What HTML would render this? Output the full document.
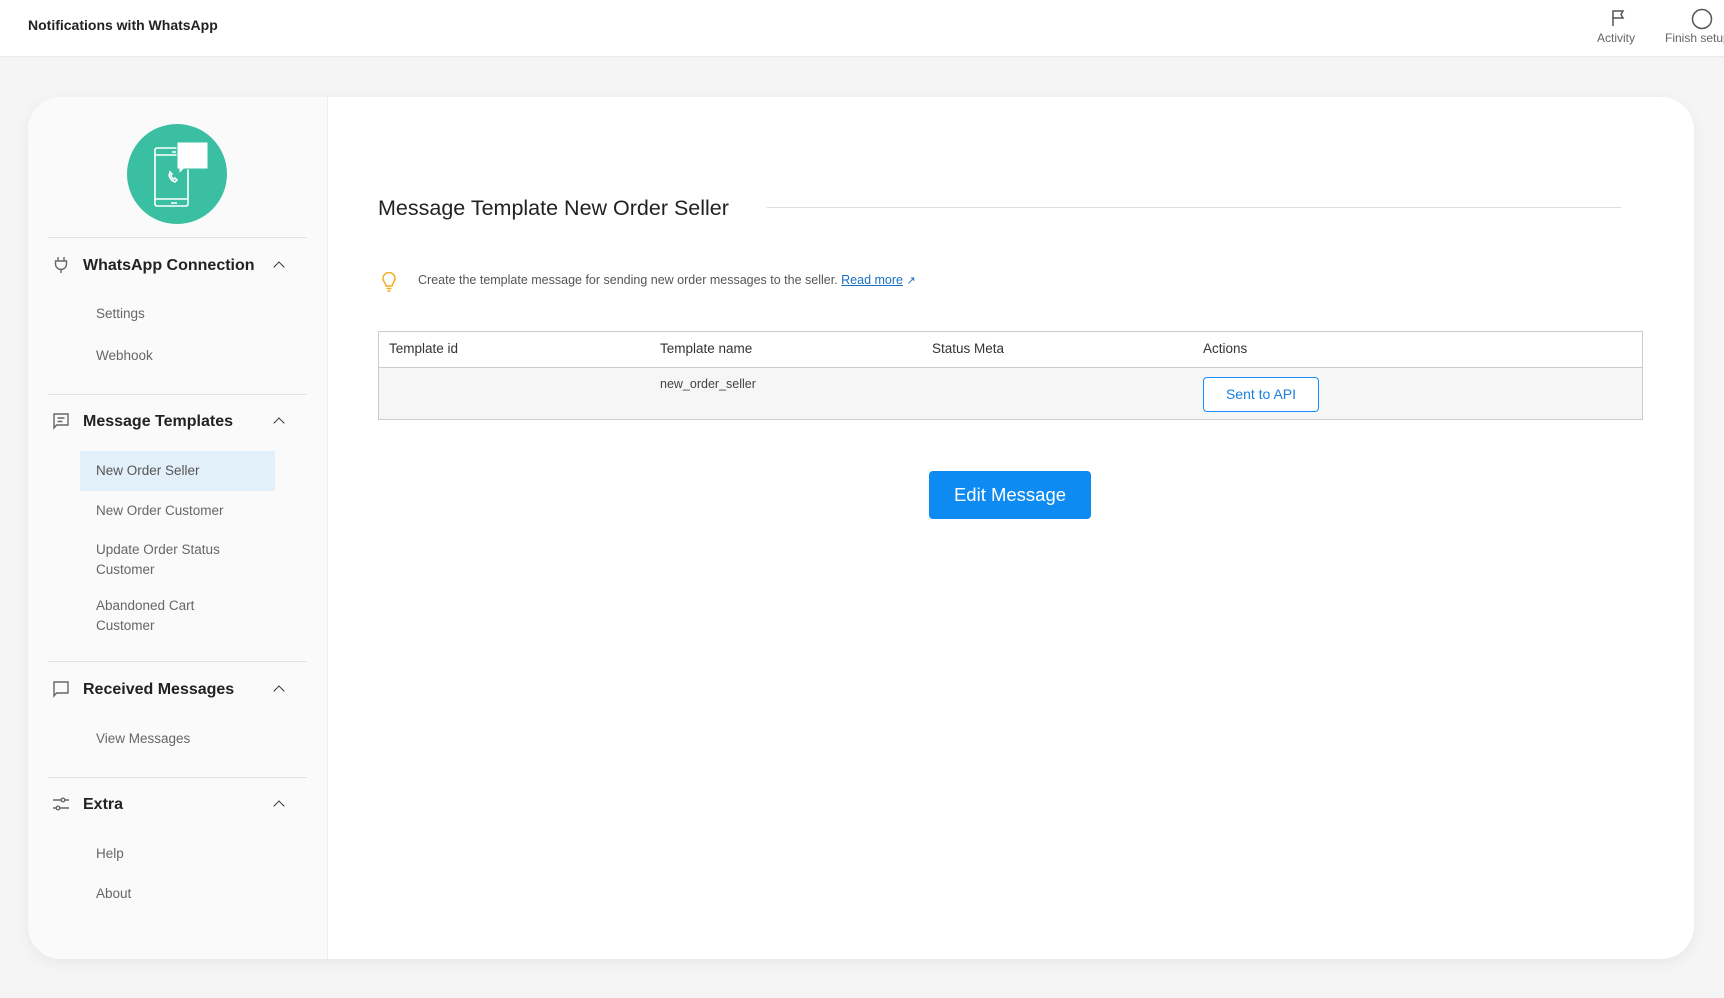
<!DOCTYPE html>
<html><head><meta charset="utf-8"><style>
*{box-sizing:border-box;margin:0;padding:0}
body{width:1724px;height:998px;background:#f5f5f5;font-family:"Liberation Sans",sans-serif;position:relative;overflow:hidden;color:#333}
.a{position:absolute;white-space:nowrap}
.hdr{position:absolute;left:0;top:0;width:1724px;height:57px;background:#fff;border-bottom:1px solid #eaeaea}
.card{position:absolute;left:28px;top:97px;width:1666px;height:862px;background:#fff;border-radius:33px;overflow:hidden;box-shadow:0 4px 14px rgba(0,0,0,.06)}
.side{position:absolute;left:0;top:0;width:300px;height:100%;background:#fafafa;border-right:1px solid #eee}
.div{position:absolute;left:20px;width:259px;height:1px;background:#e2e2e2}
.sec{position:absolute;left:55px;font-size:16px;font-weight:bold;color:#222;transform:translateY(-50%)}
.it{position:absolute;left:68px;font-size:13.5px;color:#666;line-height:20px}
.chev{position:absolute;left:247px;width:8px;height:8px;border-left:1.6px solid #333;border-top:1.6px solid #333;transform:rotate(45deg)}
.ic{position:absolute;left:24px}
</style></head><body>
<div class="hdr">
<div class="a" style="left:28px;top:17px;font-size:14px;font-weight:bold;color:#222">Notifications with WhatsApp</div>
<svg class="a" style="left:1610px;top:9px" width="18" height="18" viewBox="0 0 18 18" fill="none" stroke="#555" stroke-width="1.5"><path d="M3 17V2h10l-2 3.5 2 3.5H3"/></svg>
<div class="a" style="left:1597px;top:31px;font-size:12px;color:#666">Activity</div>
<svg class="a" style="left:1691px;top:8px" width="22" height="22"><circle cx="11" cy="11" r="9.5" fill="none" stroke="#555" stroke-width="1.5"/></svg>
<div class="a" style="left:1665px;top:31px;font-size:12px;color:#666">Finish setup</div>
</div>
<div class="card">
<div class="side">
<svg class="a" style="left:99px;top:27px" width="100" height="100" viewBox="0 0 100 100"><circle cx="50" cy="50" r="50" fill="#3bbfa2"/><g fill="none" stroke="#fff" stroke-width="1.6"><rect x="28" y="24" width="33" height="58" rx="2"/><path d="M28 31h33M28 75h33M45 28h4M44 79h6"/><path d="M43 49c-2 2 0 7 5 9l2-2-2-2-1 1c-2-1-3-2-3-4l1-1-2-2z"/></g><path d="M50 18h31v27H57l-5 5v-5h-2z" fill="#fff" stroke="#3bbfa2" stroke-width="1"/></svg>
<div class="div" style="top:140px"></div>
<svg class="ic" style="top:159px" width="18" height="18" viewBox="0 0 18 18" fill="none" stroke="#666" stroke-width="1.4"><path d="M6 1v4M12 1v4M3.5 5h11v3a5.5 5.5 0 0 1-11 0zM9 13.5V17"/></svg>
<div class="sec" style="top:169px">WhatsApp Connection</div><div class="chev" style="top:166px"></div>
<div class="it" style="top:207px">Settings</div>
<div class="it" style="top:249px">Webhook</div>
<div class="div" style="top:297px"></div>
<svg class="ic" style="top:315px" width="18" height="18" viewBox="0 0 18 18" fill="none" stroke="#666" stroke-width="1.4"><path d="M2 2h14v11H4.5L2 16z M5.5 6h7M5.5 9.5h5"/></svg>
<div class="sec" style="top:325px">Message Templates</div><div class="chev" style="top:322px"></div>
<div class="a" style="left:52px;top:354px;width:195px;height:40px;background:#e2f0fa"></div>
<div class="it" style="top:364px;color:#555">New Order Seller</div>
<div class="it" style="top:404px">New Order Customer</div>
<div class="it" style="top:443px;white-space:normal;width:170px">Update Order Status Customer</div>
<div class="it" style="top:499px;white-space:normal;width:150px">Abandoned Cart Customer</div>
<div class="div" style="top:564px"></div>
<svg class="ic" style="top:583px" width="18" height="18" viewBox="0 0 18 18" fill="none" stroke="#666" stroke-width="1.4"><path d="M2 2h14v11H4.5L2 16z"/></svg>
<div class="sec" style="top:593px">Received Messages</div><div class="chev" style="top:590px"></div>
<div class="it" style="top:632px">View Messages</div>
<div class="div" style="top:680px"></div>
<svg class="ic" style="top:698px" width="18" height="18" viewBox="0 0 18 18" fill="none" stroke="#666" stroke-width="1.4"><path d="M1 5h16M1 13h16"/><circle cx="11" cy="5" r="1.8" fill="#fafafa"/><circle cx="6" cy="13" r="1.8" fill="#fafafa"/></svg>
<div class="sec" style="top:708px">Extra</div><div class="chev" style="top:705px"></div>
<div class="it" style="top:747px">Help</div>
<div class="it" style="top:787px">About</div>
</div>
<div class="a" style="left:350px;top:99px;font-size:21.5px;color:#222">Message Template New Order Seller</div>
<div class="a" style="left:739px;top:110px;width:854px;height:1px;background:#ddd"></div>
<svg class="a" style="left:353px;top:175px" width="16" height="20" viewBox="0 0 16 20" fill="none" stroke="#f0ad1f" stroke-width="1.4"><path d="M5 14c0-3-3-4-3-7.5a6 6 0 0 1 12 0C14 10 11 11 11 14z M5.5 16.5h5M6.5 19h3"/></svg>
<div class="a" style="left:390px;top:176px;font-size:12.5px;color:#555">Create the template message for sending new order messages to the seller. <span style="color:#1a6fc2;text-decoration:underline">Read more</span> <span style="font-size:11px;color:#1a6fc2">↗</span></div>
<div class="a" style="left:350px;top:234px;width:1265px;height:89px;border:1px solid #ccc;background:#f6f6f6">
<div class="a" style="left:0;top:0;width:1263px;height:36px;background:#fff;border-bottom:1px solid #ccc"></div>
<div class="a" style="left:10px;top:9px;font-size:13.5px;color:#333">Template id</div>
<div class="a" style="left:281px;top:9px;font-size:13.5px;color:#333">Template name</div>
<div class="a" style="left:553px;top:9px;font-size:13.5px;color:#333">Status Meta</div>
<div class="a" style="left:824px;top:9px;font-size:13.5px;color:#333">Actions</div>
<div class="a" style="left:281px;top:45px;font-size:12.5px;color:#444">new_order_seller</div>
<div class="a" style="left:824px;top:45px;width:116px;height:35px;border:1px solid #1a8cff;border-radius:4px;background:#fff;color:#1a7fe0;font-size:14px;text-align:center;line-height:33px">Sent to API</div>
</div>
<div class="a" style="left:901px;top:374px;width:162px;height:48px;background:#0d8bf2;border-radius:4px;color:#fff;font-size:18.5px;text-align:center;line-height:48px">Edit Message</div>
</div>
</body></html>
